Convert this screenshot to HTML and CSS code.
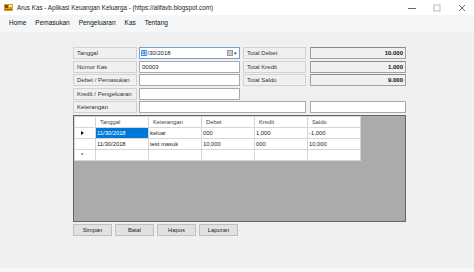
FILE: index.html
```
<!DOCTYPE html>
<html>
<head>
<meta charset="utf-8">
<link rel="stylesheet" href="styles.css">
</head>
<body>
<div class="window">
  <div class="titlebar">
    <svg class="appicon" width="9" height="9" viewBox="0 0 9 9">
      <rect x="0" y="1" width="9" height="7" fill="#d9a520"/>
      <rect x="1" y="2" width="3" height="3" fill="#6d4c1d"/>
      <rect x="5" y="2" width="3" height="2" fill="#f5e7a0"/>
      <rect x="1" y="6" width="7" height="1" fill="#a35f12"/>
    </svg>
    <span class="title">Arus Kas - Aplikasi Keuangan Keluarga - (https://alifavb.blogspot.com)</span>
    <div class="controls">
      <svg width="8" height="8" viewBox="0 0 8 8"><line x1="0" y1="4.5" x2="8" y2="4.5" stroke="#444" stroke-width="0.8"/></svg>
      <svg width="8" height="8" viewBox="0 0 8 8"><rect x="1" y="1" width="6" height="6" fill="none" stroke="#aaa" stroke-width="0.8"/></svg>
      <svg width="8" height="8" viewBox="0 0 8 8"><path d="M1 1 L7 7 M7 1 L1 7" stroke="#444" stroke-width="0.8"/></svg>
    </div>
  </div>
  <div class="menubar">
    <span>Home</span><span>Pemasukan</span><span>Pengeluaran</span><span>Kas</span><span>Tentang</span>
  </div>
  <div class="content">
    <div class="form">
      <div class="lbl">Tanggal</div>
      <div class="date"><span class="sel">11</span>/30/2018<span class="dd"><span class="cal"></span><span class="arr">▾</span></span></div>
      <div class="lbl2">Total Debet</div>
      <div class="val">10.000</div>

      <div class="lbl">Nomor Kas</div>
      <div class="inp">00003</div>
      <div class="lbl2">Total Kredit</div>
      <div class="val">1.000</div>

      <div class="lbl">Debet / Pemasukan</div>
      <div class="inp"></div>
      <div class="lbl2">Total Saldo</div>
      <div class="val">9.000</div>

      <div class="lbl">Kredit / Pengeluaran</div>
      <div class="inp"></div>
      <div></div>
      <div></div>

      <div class="lbl">Keterangan</div>
      <div class="inp wide"></div>
      <div class="inp right"></div>
    </div>

    <div class="grid">
      <table>
        <tr class="hdr"><td class="rh"></td><td>Tanggal</td><td>Keterangan</td><td>Debet</td><td>Kredit</td><td>Saldo</td></tr>
        <tr><td class="rh"><span class="tri"></span></td><td class="selc">11/30/2018</td><td>keluar</td><td>000</td><td>1,000</td><td>-1,000</td></tr>
        <tr><td class="rh"></td><td>11/30/2018</td><td>test masuk</td><td>10,000</td><td>000</td><td>10,000</td></tr>
        <tr><td class="rh">*</td><td></td><td></td><td></td><td></td><td></td></tr>
      </table>
    </div>

    <div class="buttons">
      <button>Simpan</button><button>Batal</button><button>Hapus</button><button>Laporan</button>
    </div>
  </div>
</div>
<div class="bottom"></div>
</body>
</html>
```
FILE: styles.css
```
* { box-sizing: border-box; }
html, body { margin: 0; padding: 0; }
body {
  width: 474px;
  height: 272px;
  overflow: hidden;
  background: #f8f8f8;
  font-family: "Liberation Sans", Arial, sans-serif;
  font-size: 6px;
  color: #111;
}
.window {
  height: 268px;
  background: #f0f0f0;
}
.titlebar {
  height: 15px;
  background: #ffffff;
  display: flex;
  align-items: center;
  padding-left: 4px;
}
.appicon { margin-right: 4px; }
.title { font-size: 6.3px; color: #222; }
.controls {
  margin-left: auto;
  display: flex;
  gap: 17px;
  padding-right: 8px;
  padding-top: 1px;
}
.menubar {
  height: 17px;
  background: #f5f6f7;
  display: flex;
  align-items: center;
  padding-left: 9px;
  gap: 9px;
  font-size: 6.5px;
  color: #111;
  padding-bottom: 2px;
}
.content {
  padding: 15px 0 0 73px;
}
.form {
  display: grid;
  grid-template-columns: 66px 104px 67px 96px;
  grid-auto-rows: 12px;
  row-gap: 1.5px;
}
.lbl, .lbl2 {
  border: 1px solid #d2d2d2;
  background: #f0f0f0;
  padding-left: 3px;
  display: flex;
  align-items: center;
  color: #333;
  width: 64px;
}
.lbl2 { width: 63px; }
.inp, .date {
  width: 101px;
  background: #fff;
  border: 1px solid #a9a9a9;
  display: flex;
  align-items: center;
  padding-left: 2px;
  color: #222;
}
.inp.wide { grid-column: span 2; width: 167px; }
.inp.right { width: 96px; }
.date { border-color: #7a9cd3; padding-left: 1px; }
.sel { background: #3390ff; color: #fff; }
.dd { margin-left: auto; display: flex; align-items: center; gap: 1px; padding-right: 2px; }
.cal { width: 6px; height: 6px; background: #c9c9c9; border: 1px solid #999; display: inline-block; }
.arr { font-size: 5px; color: #333; }
.val {
  width: 96px;
  border: 1px solid #a0a0a0;
  border-top-color: #8a8a8a;
  background: #f0f0f0;
  display: flex;
  align-items: center;
  justify-content: flex-end;
  padding-right: 2px;
  font-weight: bold;
  color: #111;
}
.grid {
  margin-top: 1.5px;
  width: 333px;
  height: 107px;
  background: #ababab;
  border: 1px solid #646464;
}
table {
  border-collapse: collapse;
  background: #fff;
}
td {
  height: 11px;
  width: 53px;
  border: 1px solid #d5d5d5;
  padding: 0 0 0 1px;
  font-size: 5.8px;
  color: #222;
  white-space: nowrap;
  vertical-align: middle;
}
td.rh { width: 21px; text-align: left; padding-left: 6px; }
tr.hdr td { padding-left: 4px; color: #444; }
td.selc { background: #0078d7; color: #fff; }
.tri {
  display: inline-block;
  width: 0; height: 0;
  border-left: 3px solid #111;
  border-top: 2px solid transparent;
  border-bottom: 2px solid transparent;
}
.buttons {
  margin-top: 2px;
  display: flex;
  gap: 3px;
}
button {
  width: 39px;
  height: 12px;
  padding: 0;
  font-family: "Liberation Sans", Arial, sans-serif;
  font-size: 5.8px;
  color: #222;
  background: #e1e1e1;
  border: 1px solid #c0c0c0;
}
.bottom { height: 4px; background: #f8f8f8; }
```
